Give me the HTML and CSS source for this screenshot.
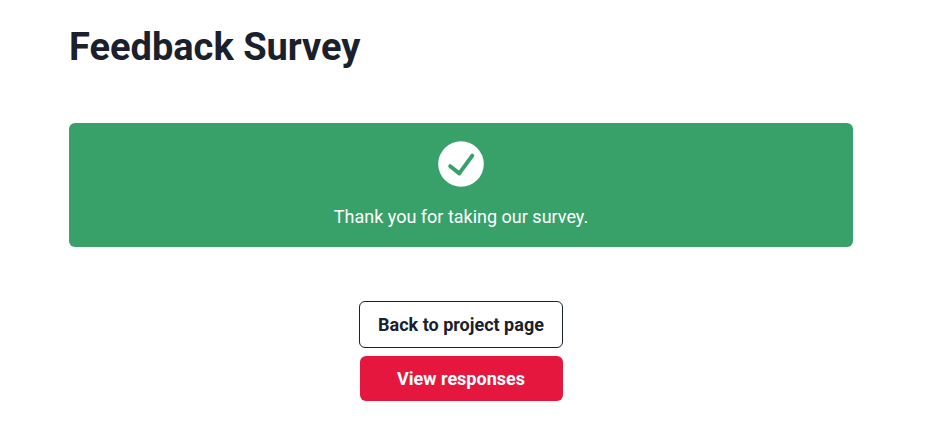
FILE: index.html
```
<!DOCTYPE html>
<html lang="en">
<head>
    <meta charset="UTF-8">
    <meta name="viewport" content="width=device-width, initial-scale=1.0">
    <title>Feedback Survey</title>
    <link rel="stylesheet" href="styles.css">
</head>
<body>
    <main class="container">
        <h1>Feedback Survey</h1>
        <div class="alert" role="status">
            <svg class="alert-icon" viewBox="0 0 46 46" aria-hidden="true">
                <circle cx="23" cy="23" r="22.8" fill="#fff"/>
                <path d="M12.2 25.2 L21.3 32.4 L34.3 14.6" fill="none" stroke="#38a169" stroke-width="4" stroke-linecap="round" stroke-linejoin="round"/>
            </svg>
            <p>Thank you for taking our survey.</p>
        </div>
        <div class="actions">
            <button type="button" class="btn btn-outline">Back to project page</button>
            <button type="button" class="btn btn-primary">View responses</button>
        </div>
    </main>
</body>
</html>
```
FILE: styles.css
```
* {
    box-sizing: border-box;
}

body {
    margin: 0;
    background: #fff;
    font-family: Roboto, sans-serif;
    font-size: 18px;
    line-height: 28px;
    color: #1a202c;
}

.container {
    max-width: 922px;
    padding: 23px 69px;
}

h1 {
    margin: 0 0 52px;
    font-size: 38px;
    line-height: 48px;
    font-weight: 700;
}

.alert {
    display: flex;
    flex-direction: column;
    align-items: center;
    gap: 16px;
    padding: 18px 16px 16px;
    border-radius: 6px;
    background: #38a169;
    color: #fff;
    text-align: center;
}

.alert-icon {
    width: 46px;
    height: 46px;
}

.alert p {
    margin: 0;
}

.actions {
    display: flex;
    flex-direction: column;
    align-items: center;
    gap: 8px;
    margin-top: 54px;
}

.btn {
    min-width: 203px;
    padding: 9px 18px;
    border: none;
    border-radius: 6px;
    font: inherit;
    font-weight: 700;
    line-height: 27px;
    cursor: pointer;
}

.btn-outline {
    border: 1px solid #1a202c;
    background: #fff;
    color: #1a202c;
}

.btn-primary {
    background: #e5173f;
    color: #fff;
}
```
